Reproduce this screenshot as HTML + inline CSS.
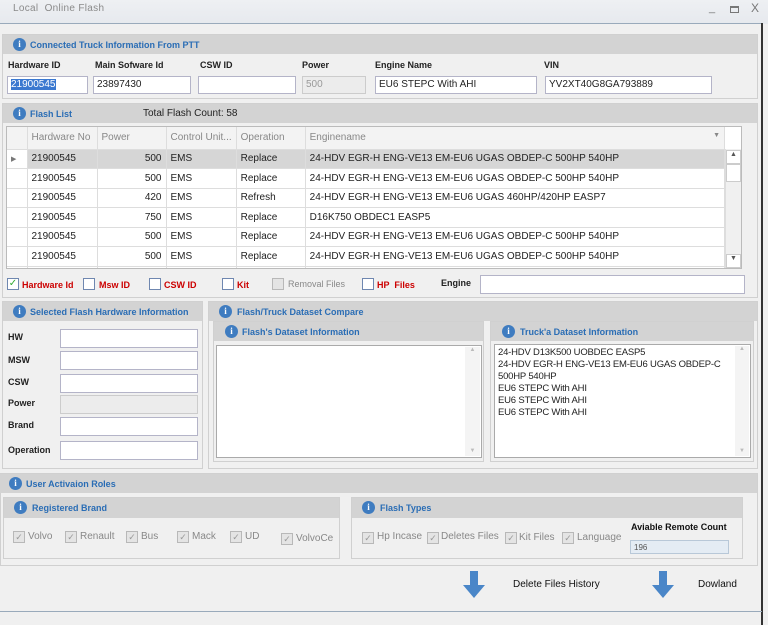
<!DOCTYPE html>
<html><head><meta charset="utf-8"><style>
*{box-sizing:border-box;margin:0;padding:0}
body{width:768px;height:625px;background:#f0f0f0;font-family:"Liberation Sans",sans-serif;font-size:10px;color:#222;position:relative;overflow:hidden}
.a{position:absolute}
.hdr{position:absolute;background:#d3d3d3;}
.ttl{position:absolute;color:#2a6db5;font-weight:bold;font-size:9px;white-space:nowrap}
.ic{position:absolute;width:13px;height:13px;border-radius:50%;background:#3f7cc0;color:#fff;font-size:9px;font-weight:bold;text-align:center;line-height:13px;font-family:"Liberation Serif",serif}
.box{position:absolute;border:1px solid #d0d0d0;background:#f0f0f0}
.inp{position:absolute;background:#fff;border:1px solid #b4b4c8;font-size:10px;padding:2px 3px;line-height:12px;white-space:nowrap}
.lbl{position:absolute;font-weight:bold;font-size:9px;color:#222;white-space:nowrap}
.cb{position:absolute;width:12px;height:12px;border:1px solid #6f87b0;background:#fff}
.cbg{position:absolute;width:12px;height:12px;border:1px solid #b8b8b8;background:#e4e4e4;color:#999;font-size:9px;line-height:10px;text-align:center}
.red{position:absolute;color:#c00;font-weight:bold;font-size:9px;white-space:nowrap}
.gt{position:absolute;color:#888;font-size:10px;white-space:nowrap}
table{border-collapse:collapse}
td{border-right:1px solid #ddd;border-bottom:1px solid #ddd;height:19.5px;padding:0 4px;font-size:10px;white-space:nowrap;overflow:hidden}
</style></head><body>
<div class="a" style="left:0;top:0;width:768px;height:24px;background:linear-gradient(#eef0f3,#e6e9ee)"></div>
<div class="a" style="left:13px;top:3px;color:#8a8a8a;font-size:10px;letter-spacing:.3px">Local &nbsp;Online Flash</div>
<div class="a" style="left:709px;top:2px;color:#777;font-size:11px">_</div>
<div class="a" style="left:730px;top:6px;width:9px;height:7px;border:1px solid #777;border-top-width:2px"></div>
<div class="a" style="left:751px;top:1px;color:#777;font-size:12px">X</div>
<div class="a" style="left:0;top:23px;width:762px;height:1px;background:#9ab"></div>
<div class="a" style="left:761px;top:23px;width:2px;height:602px;background:#333"></div>
<div class="a" style="left:0;top:611px;width:762px;height:1px;background:#9ab"></div>

<div class="box" style="left:2px;top:34px;width:756px;height:65px"></div>
<div class="hdr" style="left:3px;top:35px;width:754px;height:19px"></div>
<div class="ic" style="left:13px;top:38px">i</div>
<div class="ttl" style="left:30px;top:40px">Connected Truck Information From PTT</div>
<div class="lbl" style="left:8px;top:60px">Hardware ID</div>
<div class="lbl" style="left:95px;top:60px">Main Sofware Id</div>
<div class="lbl" style="left:200px;top:60px">CSW ID</div>
<div class="lbl" style="left:302px;top:60px">Power</div>
<div class="lbl" style="left:375px;top:60px">Engine Name</div>
<div class="lbl" style="left:544px;top:60px">VIN</div>
<div class="inp" style="left:7px;top:76px;width:81px;height:18px"><span style="background:#3a78d0;color:#fff">21900545</span></div>
<div class="inp" style="left:93px;top:76px;width:98px;height:18px">23897430</div>
<div class="inp" style="left:198px;top:76px;width:98px;height:18px"></div>
<div class="inp" style="left:302px;top:76px;width:64px;height:18px;background:#ececec;color:#999;border-color:#ccc">500</div>
<div class="inp" style="left:375px;top:76px;width:162px;height:18px">EU6 STEPC With AHI</div>
<div class="inp" style="left:545px;top:76px;width:167px;height:18px">YV2XT40G8GA793889</div>

<div class="box" style="left:2px;top:103px;width:756px;height:195px"></div>
<div class="hdr" style="left:3px;top:104px;width:754px;height:19px"></div>
<div class="ic" style="left:13px;top:107px">i</div>
<div class="ttl" style="left:30px;top:109px">Flash List</div>
<div class="a" style="left:143px;top:108px;font-size:10px;color:#222">Total Flash Count: 58</div>
<div class="a" style="left:6px;top:126px;width:736px;height:143px;background:#fff;border:1px solid #bbb;overflow:hidden">
<table style="position:absolute;left:0;top:0;width:718px">
<tr style="background:#f3f3f3;color:#888">
<td style="width:20px;height:22px"></td><td style="width:70px">Hardware No</td><td style="width:69px">Power</td><td style="width:69px">Control Unit...</td><td style="width:69px">Operation</td><td>Enginename<span style="float:right;font-size:7px">▼</span></td></tr>
<tr style="background:#d6d6d6"><td style="background:#fff;color:#777;font-size:7px">▶</td><td>21900545</td><td style="text-align:right">500</td><td>EMS</td><td>Replace</td><td>24-HDV EGR-H ENG-VE13 EM-EU6 UGAS OBDEP-C 500HP 540HP</td></tr>
<tr><td></td><td>21900545</td><td style="text-align:right">500</td><td>EMS</td><td>Replace</td><td>24-HDV EGR-H ENG-VE13 EM-EU6 UGAS OBDEP-C 500HP 540HP</td></tr>
<tr><td></td><td>21900545</td><td style="text-align:right">420</td><td>EMS</td><td>Refresh</td><td>24-HDV EGR-H ENG-VE13 EM-EU6 UGAS 460HP/420HP EASP7</td></tr>
<tr><td></td><td>21900545</td><td style="text-align:right">750</td><td>EMS</td><td>Replace</td><td>D16K750 OBDEC1 EASP5</td></tr>
<tr><td></td><td>21900545</td><td style="text-align:right">500</td><td>EMS</td><td>Replace</td><td>24-HDV EGR-H ENG-VE13 EM-EU6 UGAS OBDEP-C 500HP 540HP</td></tr>
<tr><td></td><td>21900545</td><td style="text-align:right">500</td><td>EMS</td><td>Replace</td><td>24-HDV EGR-H ENG-VE13 EM-EU6 UGAS OBDEP-C 500HP 540HP</td></tr>
<tr><td></td><td></td><td></td><td></td><td></td><td></td></tr>
</table>
<div class="a" style="left:718px;top:22px;width:17px;height:120px;background:#f0f0f0;border-left:1px solid #ddd"></div>
<div class="a" style="left:719px;top:23px;width:15px;height:14px;background:#fff;border:1px solid #ccc;font-size:7px;text-align:center;color:#555">▲</div>
<div class="a" style="left:719px;top:37px;width:15px;height:18px;background:#fff;border:1px solid #ccc"></div>
<div class="a" style="left:719px;top:127px;width:15px;height:14px;background:#fff;border:1px solid #ccc;font-size:7px;text-align:center;color:#555">▼</div>
</div>
<div class="cb" style="left:7px;top:278px;color:#3a3;font-size:10px;line-height:10px;text-align:center">✓</div>
<div class="red" style="left:22px;top:280px">Hardware Id</div>
<div class="cb" style="left:83px;top:278px"></div><div class="red" style="left:99px;top:280px">Msw ID</div>
<div class="cb" style="left:149px;top:278px"></div><div class="red" style="left:164px;top:280px">CSW ID</div>
<div class="cb" style="left:222px;top:278px"></div><div class="red" style="left:237px;top:280px">Kit</div>
<div class="cbg" style="left:272px;top:278px"></div><div class="gt" style="left:288px;top:279px;font-size:9px">Removal Files</div>
<div class="cb" style="left:362px;top:278px"></div><div class="red" style="left:377px;top:280px">HP &nbsp;Files</div>
<div class="lbl" style="left:441px;top:278px">Engine</div>
<div class="inp" style="left:480px;top:275px;width:265px;height:19px"></div>

<div class="box" style="left:2px;top:301px;width:201px;height:168px"></div>
<div class="hdr" style="left:3px;top:302px;width:199px;height:19px"></div>
<div class="ic" style="left:13px;top:305px">i</div>
<div class="ttl" style="left:30px;top:307px">Selected Flash Hardware Information</div>
<div class="lbl" style="left:8px;top:332px">HW</div>
<div class="lbl" style="left:8px;top:355px">MSW</div>
<div class="lbl" style="left:8px;top:377px">CSW</div>
<div class="lbl" style="left:8px;top:398px">Power</div>
<div class="lbl" style="left:8px;top:420px">Brand</div>
<div class="lbl" style="left:8px;top:445px">Operation</div>
<div class="inp" style="left:60px;top:329px;width:138px;height:19px"></div>
<div class="inp" style="left:60px;top:351px;width:138px;height:19px"></div>
<div class="inp" style="left:60px;top:374px;width:138px;height:19px"></div>
<div class="inp" style="left:60px;top:395px;width:138px;height:19px;background:#ececec;border-color:#ccc"></div>
<div class="inp" style="left:60px;top:417px;width:138px;height:19px"></div>
<div class="inp" style="left:60px;top:441px;width:138px;height:19px"></div>

<div class="box" style="left:208px;top:301px;width:550px;height:168px"></div>
<div class="hdr" style="left:209px;top:302px;width:548px;height:19px"></div>
<div class="ic" style="left:219px;top:305px">i</div>
<div class="ttl" style="left:237px;top:307px">Flash/Truck Dataset Compare</div>
<div class="box" style="left:213px;top:321px;width:271px;height:141px"></div>
<div class="hdr" style="left:214px;top:322px;width:269px;height:19px"></div>
<div class="ic" style="left:225px;top:325px">i</div>
<div class="ttl" style="left:242px;top:327px">Flash's Dataset Information</div>
<div class="inp" style="left:216px;top:345px;width:266px;height:113px;border-color:#aaa"></div>
<div class="a" style="left:465px;top:347px;width:15px;height:109px;background:#f4f4f4;color:#bbb;font-size:6px;text-align:center">▲<div style="position:absolute;bottom:2px;width:15px">▼</div></div>
<div class="box" style="left:490px;top:321px;width:264px;height:141px"></div>
<div class="hdr" style="left:491px;top:322px;width:262px;height:19px"></div>
<div class="ic" style="left:502px;top:325px">i</div>
<div class="ttl" style="left:520px;top:327px">Truck'a Dataset Information</div>
<div class="inp" style="left:494px;top:344px;width:257px;height:114px;border-color:#aaa;font-size:9.5px;letter-spacing:-0.2px;line-height:12px;padding:2px 3px">24-HDV D13K500 UOBDEC EASP5<br>24-HDV EGR-H ENG-VE13 EM-EU6 UGAS OBDEP-C<br>500HP 540HP<br>EU6 STEPC With AHI<br>EU6 STEPC With AHI<br>EU6 STEPC With AHI</div>
<div class="a" style="left:735px;top:346px;width:14px;height:110px;background:#f4f4f4;color:#bbb;font-size:6px;text-align:center">▲<div style="position:absolute;bottom:2px;width:14px">▼</div></div>

<div class="box" style="left:0;top:473px;width:758px;height:93px"></div>
<div class="hdr" style="left:0;top:474px;width:757px;height:19px"></div>
<div class="ic" style="left:9px;top:477px">i</div>
<div class="ttl" style="left:26px;top:479px">User Activaion Roles</div>

<div class="box" style="left:3px;top:497px;width:337px;height:62px"></div>
<div class="hdr" style="left:4px;top:498px;width:335px;height:20px"></div>
<div class="ic" style="left:14px;top:501px">i</div>
<div class="ttl" style="left:32px;top:503px">Registered Brand</div>
<div class="cbg" style="left:13px;top:531px">✓</div><div class="gt" style="left:28px;top:531px">Volvo</div>
<div class="cbg" style="left:65px;top:531px">✓</div><div class="gt" style="left:80px;top:531px">Renault</div>
<div class="cbg" style="left:126px;top:531px">✓</div><div class="gt" style="left:141px;top:531px">Bus</div>
<div class="cbg" style="left:177px;top:531px">✓</div><div class="gt" style="left:192px;top:531px">Mack</div>
<div class="cbg" style="left:230px;top:531px">✓</div><div class="gt" style="left:245px;top:531px">UD</div>
<div class="cbg" style="left:281px;top:533px">✓</div><div class="gt" style="left:296px;top:533px">VolvoCe</div>

<div class="box" style="left:351px;top:497px;width:392px;height:62px"></div>
<div class="hdr" style="left:352px;top:498px;width:390px;height:20px"></div>
<div class="ic" style="left:362px;top:501px">i</div>
<div class="ttl" style="left:380px;top:503px">Flash Types</div>
<div class="cbg" style="left:362px;top:532px">✓</div><div class="gt" style="left:377px;top:531px">Hp Incase</div>
<div class="cbg" style="left:427px;top:532px">✓</div><div class="gt" style="left:441px;top:531px">Deletes Files</div>
<div class="cbg" style="left:505px;top:532px">✓</div><div class="gt" style="left:519px;top:532px">Kit Files</div>
<div class="cbg" style="left:562px;top:532px">✓</div><div class="gt" style="left:577px;top:532px">Language</div>
<div class="lbl" style="left:631px;top:522px;color:#111">Aviable Remote Count</div>
<div class="inp" style="left:630px;top:540px;width:99px;height:14px;background:#e4ecf4;border-color:#b8c8d8;font-size:8px;color:#555;padding:1px 3px;line-height:11px">196</div>

<svg class="a" style="left:462px;top:571px" width="24" height="27"><path d="M8 0h8v14h7L12 27 1 14h7z" fill="#4a86c8"/></svg>
<div class="a" style="left:513px;top:579px;font-size:10px;color:#111">Delete Files History</div>
<svg class="a" style="left:651px;top:571px" width="24" height="27"><path d="M8 0h8v14h7L12 27 1 14h7z" fill="#4a86c8"/></svg>
<div class="a" style="left:698px;top:579px;font-size:10px;color:#111">Dowland</div>
</body></html>
